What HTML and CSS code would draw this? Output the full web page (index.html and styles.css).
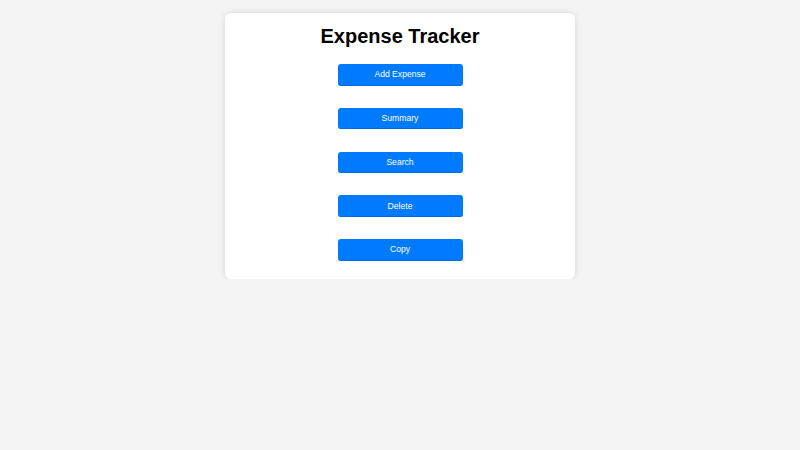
FILE: index.html
```html
<!DOCTYPE html>
<html>
<head>
<meta charset="utf-8">
<title>Expense Tracker</title>
<link rel="stylesheet" href="styles.css">
</head>
<body>
<div class="card">
  <h1 class="title">Expense Tracker</h1>
  <div class="actions">
    <button class="btn">Add Expense</button>
    <button class="btn">Summary</button>
    <button class="btn">Search</button>
    <button class="btn">Delete</button>
    <button class="btn">Copy</button>
  </div>
</div>
</body>
</html>
```
FILE: styles.css
```css
html, body {
  margin: 0;
  padding: 0;
  background: #f4f4f4;
  font-family: "Liberation Sans", Arial, sans-serif;
}
body {
  padding-top: 13px;
}
.card {
  width: 350px;
  box-sizing: border-box;
  margin: 0 auto;
  background: #fff;
  border-radius: 6px;
  box-shadow: 0 0 6px rgba(0, 0, 0, 0.12);
  padding: 12px 20px 18.5px;
}
.title {
  margin: 0 0 16px;
  font-size: 20px;
  line-height: 23px;
  text-align: center;
  font-weight: bold;
  color: #000;
}
.actions {
  display: flex;
  flex-direction: column;
  align-items: center;
  gap: 22.25px;
}
.btn {
  width: 125px;
  height: 21.5px;
  background: #007bff;
  color: #fff;
  border: none;
  border-bottom: 1px solid #0069d9;
  border-radius: 3px;
  font-family: "Liberation Sans", Arial, sans-serif;
  font-size: 8.6px;
  padding: 0;
}
```
